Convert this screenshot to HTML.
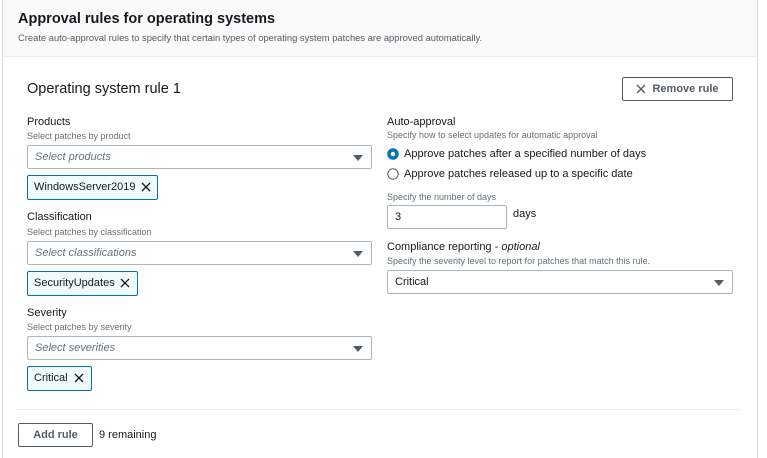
<!DOCTYPE html>
<html><head><meta charset="utf-8"><style>
*{box-sizing:border-box;margin:0;padding:0}
html,body{width:767px;height:458px;overflow:hidden}
body{background:#fff;font-family:"Liberation Sans",sans-serif;color:#16191f;position:relative}
.a{position:absolute;white-space:nowrap}
.panel{position:absolute;left:2px;top:0;width:756px;height:458px;border:1px solid #d5dbdb;border-bottom:none;background:#fff}
.hdr{position:absolute;left:2px;top:0;width:756px;height:57px;background:#fafafa;border-bottom:1px solid #eaeded;border-left:1px solid #d5dbdb;border-right:1px solid #d5dbdb}
.lbl{font-size:11px;color:#16191f}
.sub{font-size:9px;color:#687078}
.sel{position:absolute;border:1px solid #aab7b8;border-radius:2px;height:24px;font-size:11px;padding-left:7px;line-height:22px;background:#fff}
.sel i{color:#687078}
.sel:after{content:"";position:absolute;right:8px;top:9px;border-left:5px solid transparent;border-right:5px solid transparent;border-top:6px solid #545b64}
.sel.n:after{display:none}
.tok{position:absolute;border:1px solid #0073bb;background:#f1faff;border-radius:2px;height:25px;font-size:11px;line-height:23px;padding-left:6px}
.x{position:absolute;width:10px;height:10px}
.btn{position:absolute;border:1px solid #545b64;border-radius:2px;font-size:11px;font-weight:bold;color:#545b64;text-align:center}
</style></head><body>
<div class="panel"></div>
<div class="hdr"></div>
<div class="a" style="left:18px;top:11px;font-size:14.5px;font-weight:bold">Approval rules for operating systems</div>
<div class="a" style="left:18px;top:32px;font-size:9.4px;color:#545b64">Create auto-approval rules to specify that certain types of operating system patches are approved automatically.</div>
<div class="a" style="left:27px;top:81px;font-size:14.5px">Operating system rule 1</div>
<div class="btn" style="left:622px;top:77px;width:111px;height:24px;line-height:22px;padding-left:16px">Remove rule</div>
<svg class="x" style="left:636px;top:84px" viewBox="0 0 10 10"><path d="M1 1L9 9M9 1L1 9" stroke="#545b64" stroke-width="1.3"/></svg>

<div class="a lbl" style="left:27px;top:116px">Products</div>
<div class="a sub" style="left:27px;top:131px">Select patches by product</div>
<div class="sel" style="left:27px;top:145px;width:345px"><i>Select products</i></div>
<div class="tok" style="left:27px;top:175px;width:131px">WindowsServer2019</div>
<svg class="x" style="left:141px;top:182px" viewBox="0 0 10 10"><path d="M1 1L9 9M9 1L1 9" stroke="#16191f" stroke-width="1.3"/></svg>

<div class="a lbl" style="left:27px;top:211px">Classification</div>
<div class="a sub" style="left:27px;top:227px">Select patches by classification</div>
<div class="sel" style="left:27px;top:241px;width:345px"><i>Select classifications</i></div>
<div class="tok" style="left:27px;top:271px;width:111px">SecurityUpdates</div>
<svg class="x" style="left:120px;top:278px" viewBox="0 0 10 10"><path d="M1 1L9 9M9 1L1 9" stroke="#16191f" stroke-width="1.3"/></svg>

<div class="a lbl" style="left:27px;top:307px">Severity</div>
<div class="a sub" style="left:27px;top:322px">Select patches by severity</div>
<div class="sel" style="left:27px;top:336px;width:345px"><i>Select severities</i></div>
<div class="tok" style="left:27px;top:366px;width:65px">Critical</div>
<svg class="x" style="left:74px;top:373px" viewBox="0 0 10 10"><path d="M1 1L9 9M9 1L1 9" stroke="#16191f" stroke-width="1.3"/></svg>

<div class="a lbl" style="left:387px;top:116px">Auto-approval</div>
<div class="a sub" style="left:387px;top:130px">Specify how to select updates for automatic approval</div>
<svg class="a" style="left:387px;top:148px" width="12" height="12"><circle cx="6" cy="6" r="4" fill="#fff" stroke="#0073bb" stroke-width="3.5"/></svg>
<div class="a" style="left:404px;top:148px;font-size:11px">Approve patches after a specified number of days</div>
<svg class="a" style="left:387px;top:168px" width="12" height="12"><circle cx="6" cy="6" r="5.2" fill="#fff" stroke="#545b64" stroke-width="1"/></svg>
<div class="a" style="left:404px;top:168px;font-size:11px">Approve patches released up to a specific date</div>
<div class="a sub" style="left:387px;top:192px">Specify the number of days</div>
<div class="sel n" style="left:387px;top:205px;width:120px">3</div>
<div class="a" style="left:513px;top:208px;font-size:11px">days</div>
<div class="a lbl" style="left:387px;top:241px">Compliance reporting - <i>optional</i></div>
<div class="a sub" style="left:387px;top:256px">Specify the severity level to report for patches that match this rule.</div>
<div class="sel" style="left:387px;top:270px;width:346px">Critical</div>

<div class="a" style="left:18px;top:409px;width:723px;height:1px;background:#eaeded"></div>
<div class="btn" style="left:18px;top:423px;width:75px;height:24px;line-height:22px">Add rule</div>
<div class="a" style="left:99px;top:429px;font-size:11px">9 remaining</div>
</body></html>
